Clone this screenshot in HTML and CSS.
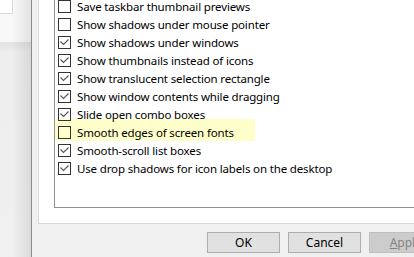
FILE: index.html
```html
<!DOCTYPE html>
<html lang="en">
<head>
  <meta charset="UTF-8">
  <title>Performance Options</title>
  <link rel="stylesheet" href="styles.css">
</head>
<body>
  <div class="screen">
    <div class="backdrop">
      <div class="backdrop-top"><div class="backdrop-field"></div></div>
      <div class="backdrop-rest"></div>
    </div>

    <div class="dialog">
      <div class="tab-page">
        <ul class="effects">
          <li class="effect"><span class="check"></span><span class="label">Save taskbar thumbnail previews</span></li>
          <li class="effect"><span class="check"></span><span class="label">Show shadows under mouse pointer</span></li>
          <li class="effect"><span class="check"><svg viewBox="0 0 11 11"><polyline points="1.5,4.5 4.5,7.5 9.5,2.5"/></svg></span><span class="label">Show shadows under windows</span></li>
          <li class="effect"><span class="check"><svg viewBox="0 0 11 11"><polyline points="1.5,4.5 4.5,7.5 9.5,2.5"/></svg></span><span class="label">Show thumbnails instead of icons</span></li>
          <li class="effect"><span class="check"><svg viewBox="0 0 11 11"><polyline points="1.5,4.5 4.5,7.5 9.5,2.5"/></svg></span><span class="label">Show translucent selection rectangle</span></li>
          <li class="effect"><span class="check"><svg viewBox="0 0 11 11"><polyline points="1.5,4.5 4.5,7.5 9.5,2.5"/></svg></span><span class="label">Show window contents while dragging</span></li>
          <li class="effect"><span class="check"><svg viewBox="0 0 11 11"><polyline points="1.5,4.5 4.5,7.5 9.5,2.5"/></svg></span><span class="label">Slide open combo boxes</span></li>
          <li class="effect marked"><span class="check"></span><span class="label">Smooth edges of screen fonts</span></li>
          <li class="effect"><span class="check"><svg viewBox="0 0 11 11"><polyline points="1.5,4.5 4.5,7.5 9.5,2.5"/></svg></span><span class="label">Smooth-scroll list boxes</span></li>
          <li class="effect"><span class="check"><svg viewBox="0 0 11 11"><polyline points="1.5,4.5 4.5,7.5 9.5,2.5"/></svg></span><span class="label">Use drop shadows for icon labels on the desktop</span></li>
        </ul>
      </div>

      <div class="actions">
        <button class="btn">OK</button>
        <button class="btn">Cancel</button>
        <button class="btn" disabled><u>A</u>pply</button>
      </div>
    </div>
  </div>
</body>
</html>
```

FILE: styles.css
```css
html, body {
  margin: 0;
  padding: 0;
  background: #f0f0f0;
}
body {
  font-family: "Noto Sans", "Open Sans", sans-serif;
  font-size: 11.5px;
  letter-spacing: -0.15px;
  color: #000;
}
.screen {
  display: flex;
  width: 414px;
  height: 257px;
  overflow: hidden;
}

/* window behind the dialog */
.backdrop {
  position: relative;
  flex: none;
  width: 31px;
  display: flex;
  flex-direction: column;
}
.backdrop::after {
  content: "";
  position: absolute;
  inset: 0;
  background: linear-gradient(to right, rgba(0,0,0,0) 40%, rgba(0,0,0,0.09));
}
.backdrop-top {
  height: 42px;
  background: #f8f8f8;
  border-bottom: 1px solid #e2e2e2;
}
.backdrop-field {
  width: 12px;
  height: 13px;
  background: #fff;
  border-right: 1px solid #d9d9d9;
  border-bottom: 1px solid #d9d9d9;
}
.backdrop-rest {
  flex: 1;
  background: linear-gradient(to bottom, #e3e3e3, #eeeeee 10px, #f0f0f0);
}

/* dialog */
.dialog {
  flex: none;
  width: 440px;
  background: #f0f0f0;
  border-left: 1px solid #8c8c8c;
}
.tab-page {
  margin-left: 6px;
  height: 208px;
  padding: 0 0 15px 15px;
  background: #fff;
  border: 1px solid #d9d9d9;
  border-top: 0;
}
.effects {
  position: relative;
  z-index: 0;
  list-style: none;
  margin: 0;
  height: 207px;
  padding: 0 0 0 3px;
  background: #fff;
  border: 1px solid #8f9196;
  border-top: 0;
}
.effect {
  position: relative;
  display: flex;
  align-items: flex-start;
  height: 18px;
}
.effect.marked::before {
  content: "";
  position: absolute;
  z-index: -1;
  left: -3px;
  top: -7px;
  width: 200px;
  height: 22px;
  background: #ffffcc;
}
.check {
  flex: none;
  width: 11px;
  height: 11px;
  border: 1px solid #333;
  margin-right: 6px;
}
.check svg {
  display: block;
  width: 11px;
  height: 11px;
  fill: none;
  stroke: #555;
  stroke-width: 1.1;
}
.label {
  line-height: 13px;
  white-space: nowrap;
}

.actions {
  display: flex;
  gap: 8px;
  margin-top: 8px;
  padding-left: 175px;
}
.btn {
  flex: none;
  width: 73px;
  height: 21px;
  padding: 0;
  font: inherit;
  letter-spacing: 0;
  font-size: 12px;
  color: #000;
  background: #e1e1e1;
  border: 1px solid #adadad;
}
.btn:disabled {
  color: #838383;
  background: #cccccc;
  border-color: #bfbfbf;
}
```
